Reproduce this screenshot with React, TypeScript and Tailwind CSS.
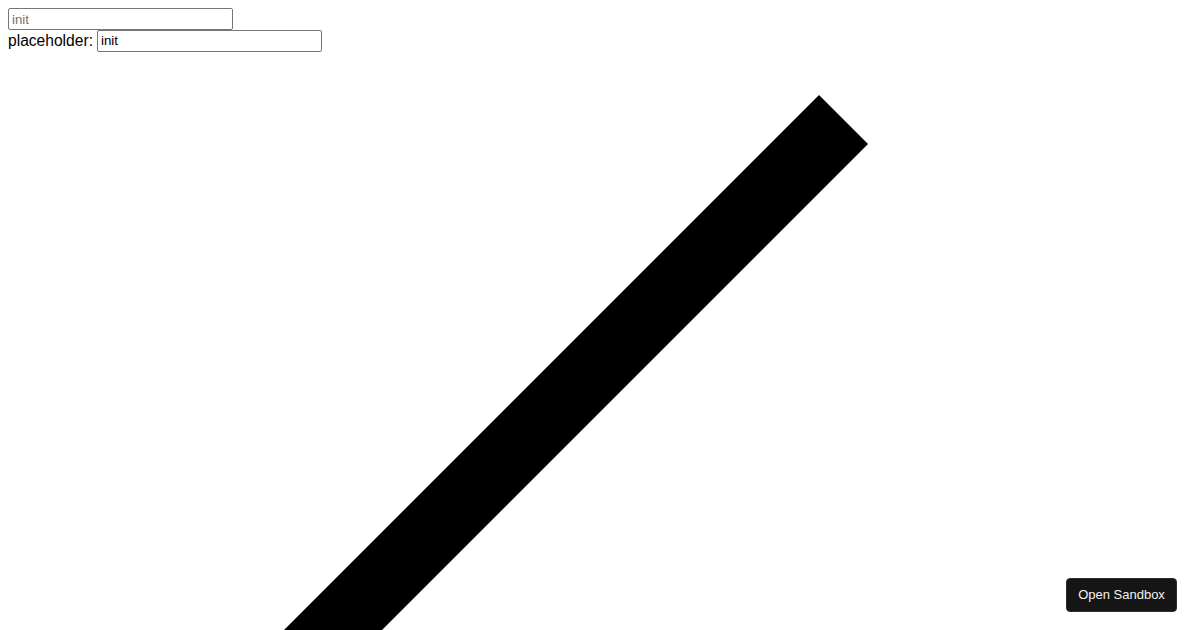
import React from "react";

export default function App() {
  return (
    <div className="relative h-[630px] w-[1200px] overflow-hidden bg-white font-['Liberation_Sans',Arial,sans-serif] text-black">
      <svg
        className="absolute left-0 top-0"
        width="1200"
        height="630"
        viewBox="0 0 1200 630"
      >
        <line
          x1="843.5"
          y1="119.5"
          x2="200"
          y2="763"
          stroke="#000"
          strokeWidth="69.3"
          strokeLinecap="butt"
        />
      </svg>
      <div className="relative p-2">
        <div className="flex">
          <input
            placeholder="init"
            className="h-[22px] w-[225px] rounded-[2px] border border-[#767676] bg-white px-[3px] text-[13.33px] text-black placeholder:text-[#757575] outline-none"
          />
        </div>
        <div className="flex items-center text-[15.6px] leading-[22px]">
          <span>placeholder:</span>
          <input
            defaultValue="init"
            className="ml-[4px] h-[22px] w-[225px] rounded-[2px] border border-[#767676] bg-white px-[3px] text-[13.33px] text-black outline-none"
          />
        </div>
      </div>
      <button className="absolute left-[1066px] top-[578px] flex h-[34px] w-[111px] items-center justify-center rounded-[4px] border border-[#2e2e2e] bg-[#151515] text-[13px] text-[#f2f2f2]">
        Open Sandbox
      </button>
    </div>
  );
}
